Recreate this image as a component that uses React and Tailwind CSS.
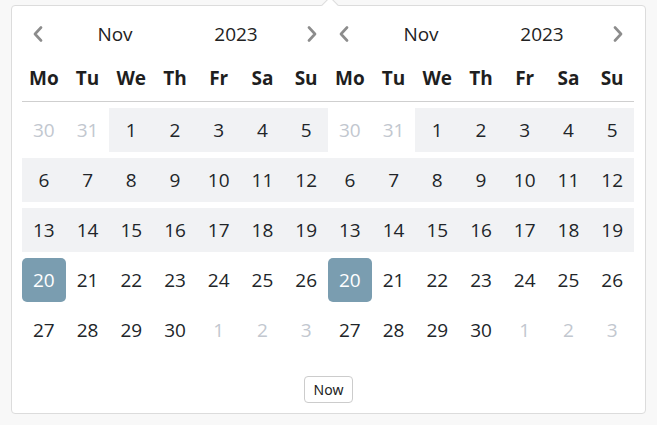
import React from "react";

const weekDays = ["Mo", "Tu", "We", "Th", "Fr", "Sa", "Su"];

// Nov 2023, week starts Monday
function buildWeeks() {
  const cells = [
    { d: 30, muted: true },
    { d: 31, muted: true },
  ];
  for (let i = 1; i <= 30; i++) cells.push({ d: i });
  [1, 2, 3].forEach((d) => cells.push({ d, muted: true }));
  const weeks = [];
  for (let i = 0; i < cells.length; i += 7) weeks.push(cells.slice(i, i + 7));
  return weeks;
}

function Chevron({ dir }) {
  return (
    <svg width="12" height="16" viewBox="0 0 12 16" fill="none">
      <path
        d={dir === "left" ? "M9 1.5 L3 8 L9 14.5" : "M3 1.5 L9 8 L3 14.5"}
        stroke="#8c8c8c"
        strokeWidth="2.6"
        strokeLinecap="round"
        strokeLinejoin="round"
      />
    </svg>
  );
}

function Month() {
  const weeks = buildWeeks();
  return (
    <div className="w-[306px]">
      <div className="flex h-[30px] items-center text-[19px] text-[#222]">
        <button className="flex w-[32px] justify-center">
          <Chevron dir="left" />
        </button>
        <div className="w-[122px] text-center">Nov</div>
        <div className="w-[120px] text-center">2023</div>
        <button className="flex w-[32px] justify-center">
          <Chevron dir="right" />
        </button>
      </div>
      <div className="grid h-[53px] grid-cols-7 items-center border-b border-[#cfcfcf] pt-[7px] text-[19px] font-bold text-[#1f1f1f]">
        {weekDays.map((w) => (
          <div key={w} className="text-center">
            {w}
          </div>
        ))}
      </div>
      <div className="pt-[3px]">
        {weeks.map((week, wi) => (
          <div key={wi} className="grid h-[50px] grid-cols-7 items-center">
            {week.map((c, ci) => {
              const inRange = !c.muted && c.d < 20;
              const selected = !c.muted && c.d === 20;
              let cls = "text-[#212529]";
              if (c.muted) cls = "text-[#c2c7cf]";
              if (inRange) cls = "bg-[#f1f2f4] text-[#212529]";
              if (selected) cls = "bg-[#7a9db0] text-white rounded-[5px]";
              return (
                <div
                  key={ci}
                  className={`flex h-[44px] items-center justify-center text-[19px] ${cls}`}
                >
                  {c.d}
                </div>
              );
            })}
          </div>
        ))}
      </div>
    </div>
  );
}

export default function App() {
  return (
    <div className="h-[425px] w-[657px] overflow-hidden bg-[#f8f8f8] pl-[11px] pt-[5px] font-['Open_Sans',sans-serif]">
      <div className="relative h-[409px] w-[635px] rounded-[4px] border border-[#dcdcdc] bg-white pt-[13px]">
        <div className="absolute -top-[7px] left-[312px] h-[12px] w-[12px] rotate-45 border-l border-t border-[#dcdcdc] bg-white" />
        <div className="flex pl-[10px]">
          <Month />
          <Month />
        </div>
        <div className="flex justify-center pt-[21px]">
          <button className="h-[27px] w-[49px] rounded-[4px] border border-[#cccccc] bg-white font-['Noto_Sans',sans-serif] text-[14px] text-[#222]">
            Now
          </button>
        </div>
      </div>
    </div>
  );
}
